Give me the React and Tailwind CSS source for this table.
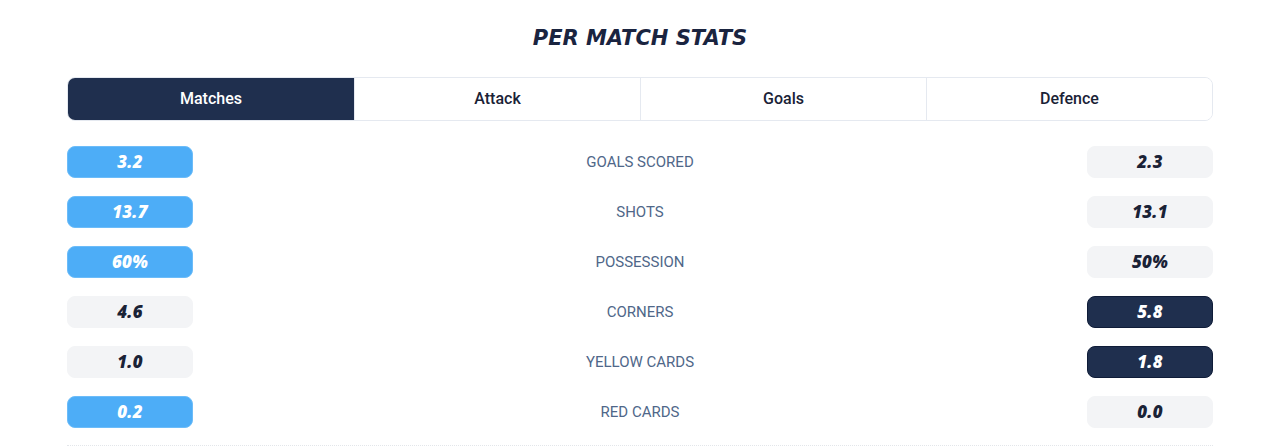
import React from "react";

const rows = [
  { label: "GOALS SCORED", l: "3.2", r: "2.3", lw: true },
  { label: "SHOTS", l: "13.7", r: "13.1", lw: true },
  { label: "POSSESSION", l: "60%", r: "50%", lw: true },
  { label: "CORNERS", l: "4.6", r: "5.8", rw: true },
  { label: "YELLOW CARDS", l: "1.0", r: "1.8", rw: true },
  { label: "RED CARDS", l: "0.2", r: "0.0", lw: true },
];

const tabs = ["Matches", "Attack", "Goals", "Defence"];
const display = "'DejaVu Sans', 'Open Sans', sans-serif";

function Pill({ v, kind }) {
  const cls =
    kind === "blue"
      ? "bg-[#4dadf7] border border-[#6cbcf9] text-white"
      : kind === "dark"
      ? "bg-[#1f2f4e] border border-[#0f1c38] text-white"
      : "bg-[#f3f4f6] border border-[#f3f4f6] text-[#1a2236]";
  return (
    <div
      className={`w-[126px] h-[32px] rounded-[8px] flex items-center justify-center text-[17px] font-extrabold italic tracking-[0.2px] ${cls}`}
      style={{ fontFamily: "'Open Sans', 'Noto Sans', sans-serif" }}
    >
      {v}
    </div>
  );
}

export default function App() {
  return (
    <div className="w-[1280px] h-[448px] bg-white overflow-hidden">
      <div className="w-[1146px] mx-auto pt-[24px]">
        <h1
          className="text-center text-[21px] leading-[28px] font-bold italic text-[#1a2440]"
          style={{ fontFamily: display }}
        >
          PER MATCH STATS
        </h1>
        <div
          className="mt-[25px] h-[44px] grid grid-cols-4 rounded-[8px] border border-[#e5e9f0] overflow-hidden"
          style={{ fontFamily: "Roboto, sans-serif" }}
        >
          {tabs.map((t, i) => (
            <div
              key={t}
              className={`flex items-center justify-center text-[16px] font-medium ${
                i === 0
                  ? "bg-[#1f2f4e] text-white"
                  : "bg-white text-[#1a2236] border-l border-[#e5e9f0]"
              }`}
            >
              {t}
            </div>
          ))}
        </div>
        <div className="mt-[25px] flex flex-col gap-[18px]">
          {rows.map((row) => (
            <div key={row.label} className="flex items-center justify-between h-[32px]">
              <Pill v={row.l} kind={row.lw ? "blue" : "gray"} />
              <div
                className="text-[15px] text-[#4f6789] uppercase"
                style={{ fontFamily: "Roboto, sans-serif" }}
              >
                {row.label}
              </div>
              <Pill v={row.r} kind={row.rw ? "dark" : "gray"} />
            </div>
          ))}
        </div>
        <div className="mt-[17px] border-t border-dotted border-[#e3e6ea]" />
      </div>
    </div>
  );
}
